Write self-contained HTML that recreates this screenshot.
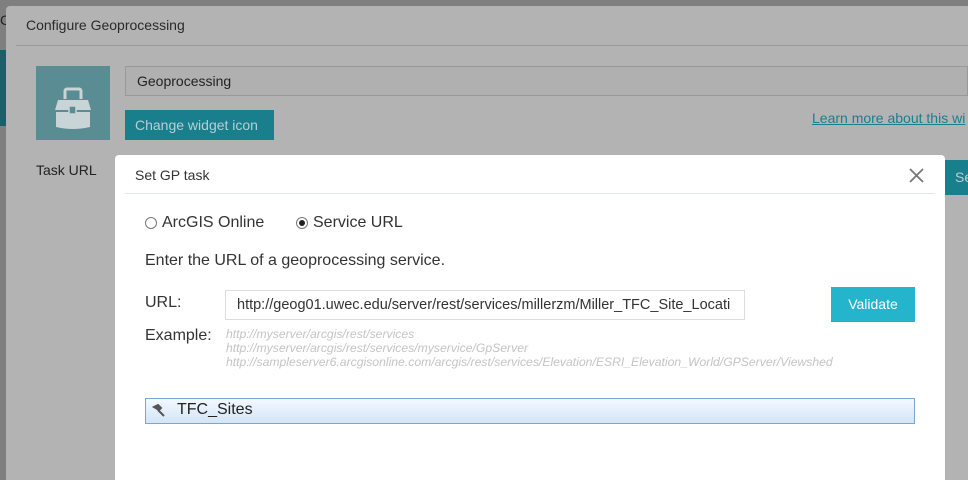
<!DOCTYPE html>
<html><head><meta charset="utf-8"><style>
*{margin:0;padding:0;box-sizing:border-box}
body{width:968px;height:480px;overflow:hidden;background:#7f7f7f;font-family:"Liberation Sans",sans-serif;position:relative;color:#333}
.a{position:absolute}
</style></head><body>
<div class="a" style="left:0;top:50px;width:6px;height:76px;background:#1a5f6a"></div>
<div class="a" style="left:0;top:12px;font-size:14px;color:#222">C</div>
<div class="a" style="left:6px;top:6px;width:962px;height:474px;background:#b3b3b3;border-radius:4px 0 0 0"></div>
<div class="a" style="left:26px;top:17px;font-size:14px;color:#2a2a2a">Configure Geoprocessing</div>
<div class="a" style="left:16px;top:45px;width:952px;height:1px;background:#999"></div>
<div class="a" style="left:36px;top:66px;width:74px;height:74px;background:#5a8c93">
<svg width="74" height="74" viewBox="0 0 74 74" fill="none" stroke="#c8d4d6" stroke-width="2"><path d="M29 33v-8a2 2 0 0 1 2-2h12a2 2 0 0 1 2 2v8" stroke-width="3"/><path d="M19 44l3-10h30l3 10z" fill="#c8d4d6" stroke="none"/><path d="M20 46h34v15q-17 4-34 0z" fill="#c8d4d6" stroke="none"/><rect x="33" y="40" width="7" height="8" fill="#5a8c93" stroke="#c8d4d6" stroke-width="1.5"/></svg></div>
<div class="a" style="left:125px;top:66px;width:843px;height:30px;border:1px solid #999;background:#b0b0b0"></div>
<div class="a" style="left:137px;top:73px;font-size:14px;color:#222">Geoprocessing</div>
<div class="a" style="left:125px;top:110px;width:149px;height:30px;background:#1a7f8c;color:#b6cfd2;font-size:14px;padding:7px 0 0 10px">Change widget icon</div>
<div class="a" style="left:812px;top:110px;font-size:14px;color:#1a7f8c;text-decoration:underline;white-space:nowrap">Learn more about this wi</div>
<div class="a" style="left:36px;top:162px;font-size:14px;color:#222">Task URL</div>
<div class="a" style="left:945px;top:160px;width:23px;height:35px;background:#1a7f8c;color:#b6cfd2;font-size:14px;padding:9px 0 0 10px">Se</div>
<div class="a" style="left:115px;top:155px;width:830px;height:325px;background:#fff;border-radius:4px 4px 0 0"></div>
<div class="a" style="left:135px;top:167px;font-size:14px;color:#333">Set GP task</div>
<svg class="a" style="left:909px;top:168px" width="15" height="15"><path d="M1 1L14 14M14 1L1 14" stroke="#777" stroke-width="1.8"/></svg>
<div class="a" style="left:125px;top:193px;width:810px;height:1px;background:#dde9f3"></div>
<div class="a" style="left:145px;top:217px;width:12px;height:12px;border:1px solid #777;border-radius:50%"></div>
<div class="a" style="left:162px;top:214px;font-size:16px">ArcGIS Online</div>
<div class="a" style="left:296px;top:217px;width:12px;height:12px;border:1px solid #777;border-radius:50%"><div style="margin:2px;width:6px;height:6px;border-radius:50%;background:#222"></div></div>
<div class="a" style="left:313px;top:214px;font-size:16px">Service URL</div>
<div class="a" style="left:145px;top:252px;font-size:16px">Enter the URL of a geoprocessing service.</div>
<div class="a" style="left:145px;top:294px;font-size:16px">URL:</div>
<div class="a" style="left:225px;top:290px;width:520px;height:30px;border:1px solid #ddd;font-size:14.5px;padding:6px 0 0 11px;white-space:nowrap;overflow:hidden">http://geog01.uwec.edu/server/rest/services/millerzm/Miller_TFC_Site_Locati</div>
<div class="a" style="left:831px;top:287px;width:84px;height:35px;background:#24b5cc;color:#fff;font-size:14px;text-align:center;padding-top:9px">Validate</div>
<div class="a" style="left:145px;top:327px;font-size:16px">Example:</div>
<div class="a" style="left:226px;top:327px;font-size:12.2px;font-style:italic;color:#c4c4c4;line-height:14px;white-space:nowrap">http://myserver/arcgis/rest/services<br>http://myserver/arcgis/rest/services/myservice/GpServer<br>http://sampleserver6.arcgisonline.com/arcgis/rest/services/Elevation/ESRI_Elevation_World/GPServer/Viewshed</div>
<div class="a" style="left:145px;top:398px;width:770px;height:26px;border:1px solid #7ea6c9;background:linear-gradient(#f3f8fe,#d3e5f8)"></div>
<svg class="a" style="left:152px;top:404px" width="14" height="14"><path d="M2 3l4-2 3 3-2 2zM6 6l6 6" stroke="#555" stroke-width="2" fill="#555"/></svg>
<div class="a" style="left:177px;top:401px;font-size:16px;color:#222">TFC_Sites</div>
</body></html>
